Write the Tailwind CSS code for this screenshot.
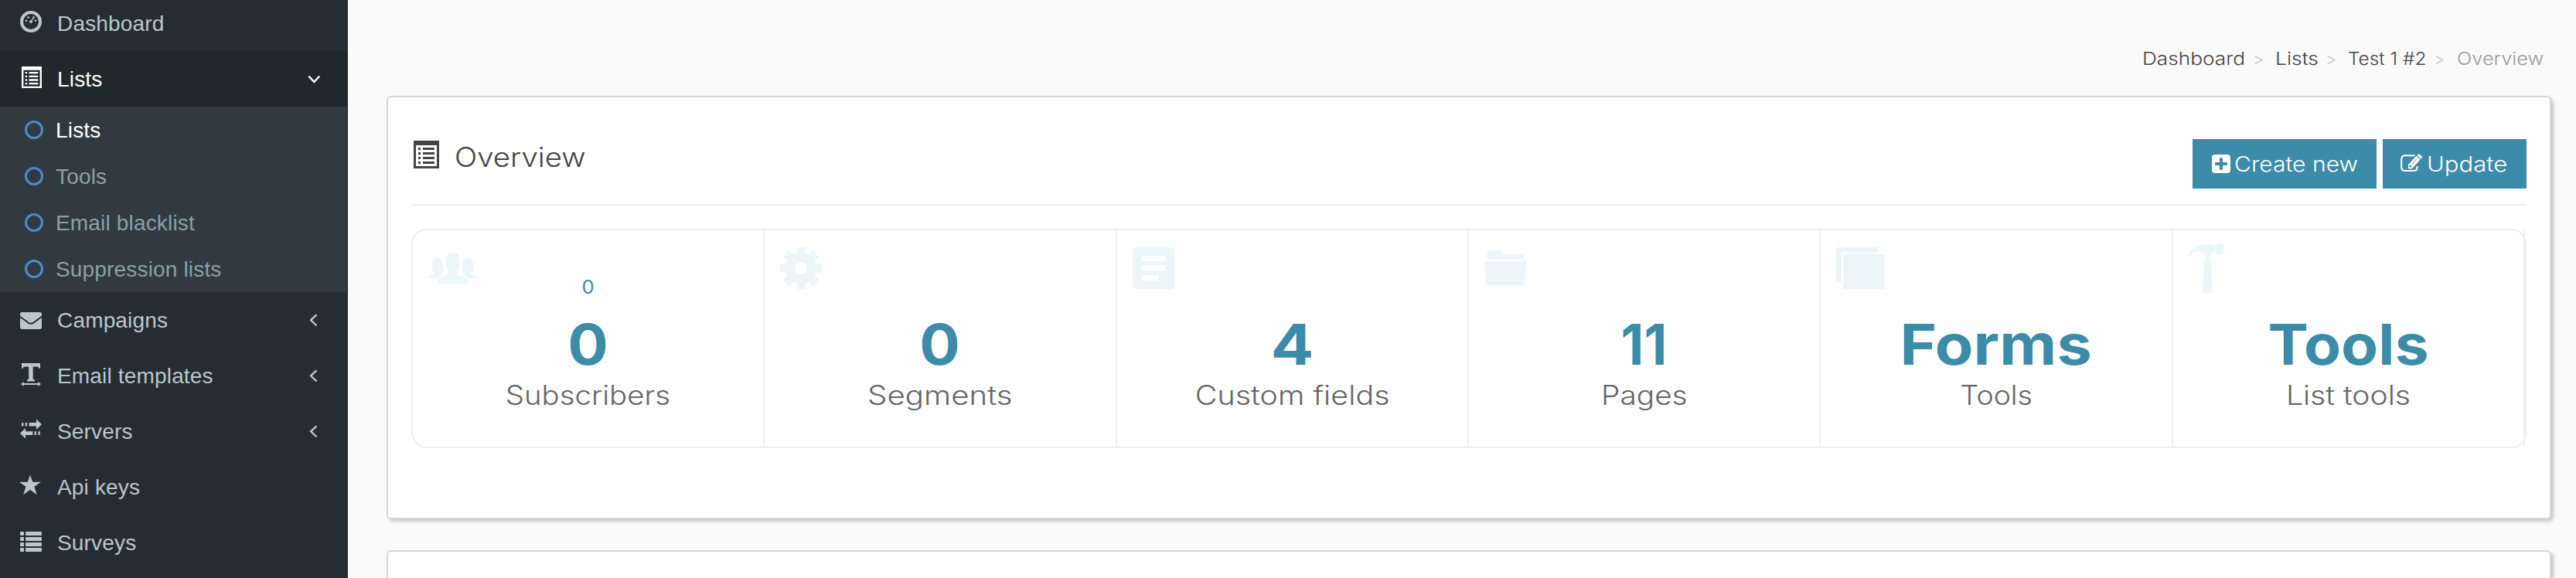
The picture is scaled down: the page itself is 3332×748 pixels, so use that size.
<!DOCTYPE html>
<html lang="en">
<head>
<meta charset="utf-8">
<title>Overview</title>
<script src="https://cdn.jsdelivr.net/npm/@tailwindcss/browser@4"></script>
</head>
<body class="h-[748px] w-[3332px] overflow-hidden bg-[#fafafa] font-[Inter,sans-serif] font-light">
<svg class="hidden">
  <symbol id="list-alt" viewBox="0 0 11 12" preserveAspectRatio="none">
    <path fill-rule="evenodd" d="M0 0H11V12H0ZM1 2V11H10V2Z"/>
    <path d="M2 3H3V4H2ZM4 3H9V4H4ZM2 5H3V6H2ZM4 5H9V6H4ZM2 7H3V8H2ZM4 7H9V8H4ZM2 9H3V10H2ZM4 9H9V10H4Z"/>
  </symbol>
  <symbol id="chev" viewBox="0 0 16 16"><path d="M12 1 4.5 8 12 15" transform="translate(-.5 .3)" fill="none" stroke="currentColor" stroke-width="2.4"/></symbol>
</svg>
<div class="flex h-full">
  <aside class="h-full w-[450px] shrink-0 overflow-hidden bg-[#252c33] font-['Liberation_Sans',sans-serif] text-[28px] leading-8 font-normal tracking-[0.17px] text-[#bbc6cd]">
    <a class="flex h-[66px] items-center gap-[18px] pb-1.5 pl-6">
      <svg class="size-8" viewBox="0 0 32 32" fill="currentColor"><circle cx="16" cy="14" r="12" fill="none" stroke="currentColor" stroke-width="4"/><circle cx="10" cy="12.8" r="1.3"/><circle cx="12.6" cy="8.6" r="1.3"/><circle cx="22" cy="12.8" r="1.3"/><path d="m16 14.5 3.6-6" stroke="currentColor" stroke-width="1.4"/><circle cx="19.7" cy="8.3" r="1.2"/><circle cx="16" cy="14" r="2"/></svg>
      <span class="pt-0.5">Dashboard</span>
    </a>
    <a class="flex h-[72px] items-center gap-[18px] bg-[#21282b] pl-6 text-white">
      <svg class="size-8" viewBox="0 0 32 32" fill="currentColor"><use href="#list-alt" x="4" y="0" width="26" height="28"/></svg>
      <span class="flex-1 pt-0.5">Lists</span>
      <svg class="mr-[36px] size-4 -rotate-90" viewBox="0 0 16 16"><use href="#chev"/></svg>
    </a>
    <div class="w-[448px] bg-[#313a41] text-[#8aa0ab]">
      <a class="flex h-[60px] items-center gap-4 pl-8 text-white"><i class="size-6 rounded-full border-[3.5px] border-[#5089c8]"></i><span class="pt-0.5">Lists</span></a>
      <a class="flex h-[60px] items-center gap-4 pl-8"><i class="size-6 rounded-full border-[3.5px] border-[#5089c8]"></i><span class="pt-0.5">Tools</span></a>
      <a class="flex h-[60px] items-center gap-4 pl-8"><i class="size-6 rounded-full border-[3.5px] border-[#5089c8]"></i><span class="pt-0.5">Email blacklist</span></a>
      <a class="flex h-[60px] items-center gap-4 pl-8"><i class="size-6 rounded-full border-[3.5px] border-[#5089c8]"></i><span class="pt-0.5">Suppression lists</span></a>
    </div>
    <a class="flex h-[72px] items-center gap-[18px] pl-6">
      <svg class="size-8" viewBox="0 0 32 32" fill="currentColor"><rect x="2" y="6" width="28" height="22" rx="2.5"/><path d="M1.5 11.5 12.5 19.6Q16 22 19.5 19.6L30.5 11.5" fill="none" stroke="#252c33" stroke-width="1.9"/></svg>
      <span class="flex-1 pt-0.5">Campaigns</span>
      <svg class="mr-[36px] size-4" viewBox="0 0 16 16"><use href="#chev"/></svg>
    </a>
    <a class="flex h-[72px] items-center gap-[18px] pl-6">
      <svg class="size-8" viewBox="0 0 32 32" fill="currentColor"><path d="M4 0H28V6.7H26.4Q26 4.6 24 4.6H18.7V20.6L21 21.6V23.4H11V21.6L13.2 20.6V4.6H8Q6 4.6 5.6 6.7H4Z"/><path d="M3 27 6.7 24V26H25.3V24L29 27 25.3 30V28H6.7V30Z"/></svg>
      <span class="flex-1 pt-0.5">Email templates</span>
      <svg class="mr-[36px] size-4" viewBox="0 0 16 16"><use href="#chev"/></svg>
    </a>
    <a class="flex h-[72px] items-center gap-[18px] pl-6">
      <svg class="size-8" viewBox="0 0 32 32" fill="currentColor"><path d="M4 5H6.4V9.4H4ZM8.6 5H11V9.4H8.6ZM13.5 5H23V.3L30 7.2 23 14V9.4H13.5ZM2 18.8 9 12V16.3H18.4V21H9V25.5ZM20.6 16.3H23V21H20.6ZM25.4 16.3H27.8V21H25.4Z"/></svg>
      <span class="flex-1 pt-0.5">Servers</span>
      <svg class="mr-[36px] size-4" viewBox="0 0 16 16"><use href="#chev"/></svg>
    </a>
    <a class="flex h-[72px] items-center gap-[18px] pl-6">
      <svg class="size-8" viewBox="0 0 32 32" fill="currentColor"><path d="M15 .8 18.3 9.8H29L20.4 15.7 23.6 26.2 15 19.8 6.2 26.2 9.4 15.7 .9 9.8H11.7Z"/></svg>
      <span class="pt-0.5">Api keys</span>
    </a>
    <a class="flex h-[72px] items-center gap-[18px] pl-6">
      <svg class="size-8" viewBox="0 0 32 32" fill="currentColor"><rect x="2" y="2" width="5" height="5" rx="1"/><rect x="9" y="2" width="21" height="5" rx="1"/><rect x="2" y="9" width="5" height="5" rx="1"/><rect x="9" y="9" width="21" height="5" rx="1"/><rect x="2" y="16" width="5" height="5" rx="1"/><rect x="9" y="16" width="21" height="5" rx="1"/><rect x="2" y="23" width="5" height="5" rx="1"/><rect x="9" y="23" width="21" height="5" rx="1"/></svg>
      <span class="pt-0.5">Surveys</span>
    </a>
  </aside>

  <main class="flex h-full min-w-0 flex-1 flex-col overflow-hidden pr-8 pl-[50px]">
    <nav class="flex h-[124px] shrink-0 justify-end pt-[64px] pr-[9px] text-[23.3px] leading-6 whitespace-nowrap text-[#444]">
      <a class="w-[143px] shrink-0"><span class="inline-block origin-left scale-x-[1.125]">Dashboard</span></a><span class="w-[29px] text-[22px] text-[#c4c4c4]">&gt;</span>
      <a class="w-[65px]"><span class="inline-block origin-left scale-x-[1.134]">Lists</span></a><span class="w-[29px] text-[22px] text-[#c4c4c4]">&gt;</span>
      <a class="w-[111px]"><span class="inline-block origin-left scale-x-[1.048]">Test 1 #2</span></a><span class="w-[30px] text-[22px] text-[#c4c4c4]">&gt;</span>
      <span class="w-[113px] text-[#999]"><span class="inline-block origin-left scale-x-[1.09]">Overview</span></span>
    </nav>

    <section class="h-[548px] shrink-0 rounded-md border-2 border-[#d1d6dc] bg-white px-[30px] shadow-[3px_3px_4px_rgba(0,0,0,0.2)]">
      <header class="flex h-[140px] items-start justify-between border-b-2 border-[#eee] pt-[54px]">
        <h1 class="flex gap-[20px] pt-0.5 pl-[3px] text-[34.7px] leading-9 text-[#444]">
          <svg class="h-9 w-[33px]" fill="#444"><use href="#list-alt" width="33" height="36"/></svg>
          <span class="origin-left scale-x-[1.107] pt-[3px]">Overview</span>
        </h1>
        <div class="flex gap-2 text-[27px] leading-8 whitespace-nowrap text-white">
          <a class="flex h-16 w-[238px] items-center gap-1 bg-[#3c8ca9] pl-6">
            <svg class="size-[26px] shrink-0" viewBox="0 0 26 26"><path fill="#fff" fill-rule="evenodd" d="M5 1H21Q25 1 25 5V21Q25 25 21 25H5Q1 25 1 21V5Q1 1 5 1ZM11 5.2V11H5.2V15H11V20.8H15V15H20.8V11H15V5.2Z"/></svg>
            <span class="origin-left scale-x-[1.113] pt-0.5">Create new</span>
          </a>
          <a class="flex h-16 w-[186px] items-center gap-[5px] bg-[#3c8ca9] pl-[22px]">
            <svg class="h-[26px] w-[30px] shrink-0" viewBox="0 0 30 26"><path d="M19.5 2.3H7Q2.2 2.3 2.2 7V17.5Q2.2 22 7 22H18Q22.6 22 22.6 17.5V16" fill="none" stroke="#fff" stroke-width="2"/><path fill="#fff" fill-rule="evenodd" d="M11 19.2V14L21.6 2.8 26.6 7.6 16 19.2ZM12.5 15.3V17.5H14.8L15.8 16.5 13.5 14.2ZM22.5 2 24 .8Q25 .3 26 1L28.6 3.6Q29.3 4.8 28.6 5.6L27.4 6.8Z"/><path d="m16 13 6-6.5" stroke="#3c8ca9" stroke-width=".9"/></svg>
            <span class="origin-left scale-x-[1.15] pt-0.5">Update</span>
          </a>
        </div>
      </header>

      <div class="mt-[30px] grid h-[284px] grid-cols-6 rounded-[20px] border-2 border-[#eee] text-center leading-none text-[#666]">
        <a class="relative flex flex-col items-center border-r-2 border-[#eee] pt-[62px]">
          <svg class="absolute top-[29px] left-5 h-10 w-[63px]" viewBox="0 0 63 40" fill="#ecf6f9">
            <path d="M12 40C12 34 15 31 20 30.3C24 29.7 26.3 28.8 26.3 26.8V24.5C25 23 24.6 21 24.3 19.5C23.2 19 22.9 17 22.9 15.5C22.7 14.5 23 13.5 23.3 13C22.3 4 24.5 0 31.6 0S40.9 4 39.9 13C40.3 13.5 40.5 14.5 40.3 15.5C40.3 17 40 19 38.9 19.5C38.6 21 38.2 23 36.9 24.5V26.8C36.9 28.8 39.2 29.7 43.2 30.3C48.2 31 51.2 34 51.2 40Z"/>
            <path id="side" d="M0 33C.3 29.5 2.5 28.6 5.5 27.8C8 27.2 9 26.8 9 25.3C6.8 25.3 5.2 24.4 4.3 23.3C5.5 21 5 17 5.2 13.5C5.5 9 8 6.7 11.9 6.7S18 9 18.4 13.5C18.6 17 18.2 21 19.3 23.3C18.4 24.4 17 25.2 15 25.3C15 26.6 16 27.2 19 28C16 29 13.5 30.5 12 33Z"/>
            <use href="#side" transform="translate(63 0) scale(-1 1)"/>
          </svg>
          <span class="h-[23px] scale-x-[1.07] text-[24px] font-normal text-[#3c8ca9]">0</span>
          <strong class="mt-[26px] scale-x-[1.07] text-[73px] font-bold text-[#3c8ca9]">0</strong>
          <span class="mt-3 scale-x-[1.106] text-[34.7px]">Subscribers</span>
        </a>
        <a class="relative flex flex-col items-center border-r-2 border-[#eee] pt-[62px]">
          <svg class="absolute top-[22px] left-5 size-[54px]" viewBox="0 0 54 54" fill="#ecf6f9">
            <path fill-rule="evenodd" d="M27 6.5A20.5 20.5 0 1 1 27 47.5A20.5 20.5 0 1 1 27 6.5ZM27 19.4A7.6 7.6 0 1 0 27 34.6A7.6 7.6 0 1 0 27 19.4Z"/>
            <g id="teeth"><rect x="21.6" width="10.8" height="9"/><rect x="21.6" y="45" width="10.8" height="9"/><rect y="21.6" width="9" height="10.8"/><rect x="45" y="21.6" width="9" height="10.8"/></g>
            <use href="#teeth" transform="rotate(45 27 27)"/>
          </svg>
          <span class="h-[23px]"></span>
          <strong class="mt-[26px] scale-x-[1.07] text-[73px] font-bold text-[#3c8ca9]">0</strong>
          <span class="mt-3 scale-x-[1.16] text-[34.7px]">Segments</span>
        </a>
        <a class="relative flex flex-col items-center border-r-2 border-[#eee] pt-[62px]">
          <svg class="absolute top-[22px] left-5 size-[54px]" viewBox="0 0 54 54" fill="#ecf6f9">
            <path fill-rule="evenodd" d="M6 0H48Q54 0 54 6V48Q54 54 48 54H6Q0 54 0 48V6Q0 0 6 0ZM11.2 11V18H43V11ZM11.2 23.7V30.2H43V23.7ZM11.2 36V43H34V36Z"/>
          </svg>
          <span class="h-[23px]"></span>
          <strong class="mt-[26px] scale-x-[1.13] text-[73px] font-bold text-[#3c8ca9]">4</strong>
          <span class="mt-3 scale-x-[1.138] text-[34.7px]">Custom fields</span>
        </a>
        <a class="relative flex flex-col items-center border-r-2 border-[#eee] pt-[62px]">
          <svg class="absolute top-[26px] left-5 h-[46px] w-[54px]" viewBox="0 0 54 46" fill="#ecf6f9">
            <path d="M3 12 3.7 2.5Q4 0 6.5 0H18.5Q21 0 22.5 2L24 3.8Q25 5 27 5H48.5Q51 5 51 8V12ZM2 14H52Q54.2 14 54 16.3L52.4 43.5Q52.2 45.6 50 45.6H4Q1.9 45.6 1.7 43.5L0 16.3Q-.1 14 2 14Z"/>
          </svg>
          <span class="h-[23px]"></span>
          <strong class="mt-[26px] scale-x-[0.95] text-[73px] font-bold text-[#3c8ca9]">11</strong>
          <span class="mt-3 scale-x-[1.118] text-[34.7px]">Pages</span>
        </a>
        <a class="relative flex flex-col items-center border-r-2 border-[#eee] pt-[62px]">
          <svg class="absolute top-[22px] left-5 h-[54px] w-[63px]" viewBox="0 0 63 54" fill="#ecf6f9"><path d="M0 0H54V6.8H7V45H0ZM9 9H63V54H9Z"/></svg>
          <span class="h-[23px]"></span>
          <strong class="mt-[26px] scale-x-[1.113] text-[73px] font-bold text-[#3c8ca9]">Forms</strong>
          <span class="mt-3 scale-x-[1.081] text-[34.7px]">Tools</span>
        </a>
        <a class="relative flex flex-col items-center border-r-2 border-[#eee] pt-[62px]">
          <svg class="absolute top-[17px] left-5 h-16 w-[45px]" viewBox="0 0 45 64" fill="#ecf6f9"><path d="M0 15C3 6 12 1 23 1H30C32 1 32.5 3 34 3S35.5 0 37 0H45V14H37C35.5 14 35.5 10.5 33.5 10.5C30 11.5 27.5 15 27.5 19V23H28.5Q29.6 23 29.6 25C29.6 40 30 50 31.3 64H17.6C19 50 19.7 40 19.7 25Q19.7 23 21 23H21.8V19C21.8 14 17 10 12 10C7 10 4 13 1 17Z"/></svg>
          <span class="h-[23px]"></span>
          <strong class="mt-[26px] scale-x-[1.077] text-[73px] font-bold text-[#3c8ca9]">Tools</strong>
          <span class="mt-3 scale-x-[1.127] text-[34.7px]">List tools</span>
        </a>
      </div>
    </section>

    <section class="mt-10 min-h-0 flex-1 rounded-t-md border-2 border-b-0 border-[#d1d6dc] bg-white shadow-[3px_3px_4px_rgba(0,0,0,0.2)]"></section>
  </main>
</div>
</body>
</html>
